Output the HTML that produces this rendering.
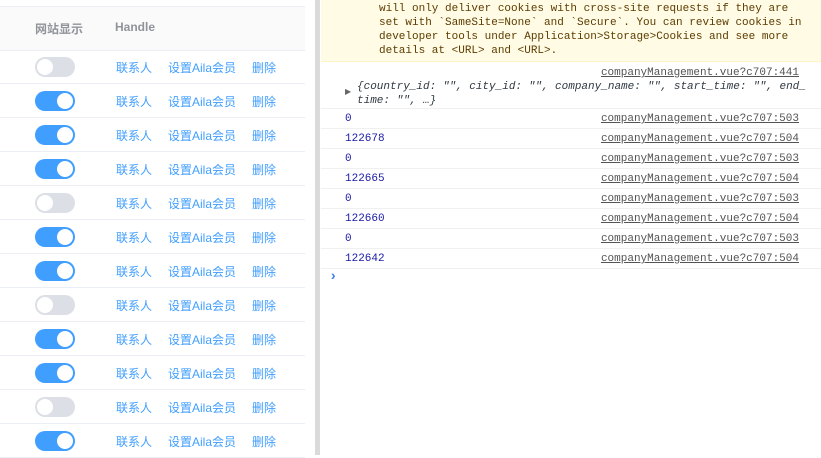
<html><head><style>
body{margin:0;width:821px;height:455px;overflow:hidden;background:#fff;font-family:"Liberation Sans","Noto Sans CJK SC",sans-serif;position:relative}
.hd{position:absolute;top:6px;left:0;width:305px;height:43px;background:#fafafa;border-top:1px solid #ebeef5;border-bottom:1px solid #ebeef5;font-size:12px;color:#909399;font-weight:bold}
.row{position:absolute;left:0;width:305px;height:33px;border-bottom:1px solid #ebeef5;font-size:12px;color:#409eff}
.sw{position:absolute;left:35px;top:7px;width:40px;height:20px;border-radius:10px;background:#dcdfe6}
.sw i{position:absolute;top:2px;left:2px;width:16px;height:16px;border-radius:50%;background:#fff}
.on{background:#409eff}.on i{left:22px}
.row span{position:absolute;top:9px}
.bar{position:absolute;left:315px;top:0;width:5px;height:455px;background:#dadada}
.c{position:absolute;left:321px;top:0;right:0;height:455px;font-family:"Liberation Mono",monospace;font-size:11px;color:#303942;white-space:nowrap}
.warn{position:absolute;left:0;top:0;right:0;height:60px;background:#fffbe5;border-bottom:1px solid #fff5c2;color:#5c3c00;padding-left:58px;line-height:14px}
.ln{position:absolute;left:0;right:0;border-bottom:1px solid #f0f0f0;height:19px;line-height:21px}
.ln b{font-weight:normal;color:#1a1aa6;position:absolute;left:24px}
.ln u,.src{position:absolute;right:22px;color:#545454}
</style></head><body>
<div class="hd"><span style="position:absolute;left:35px;top:13px">网站显示</span><span style="position:absolute;left:115px;top:13px">Handle</span></div>
<div id="rows"></div>
<script>
var s=[0,1,1,1,0,1,1,0,1,1,0,1],h='';
for(var i=0;i<12;i++){h+='<div class="row" style="top:'+(50+i*34)+'px"><div class="sw'+(s[i]?' on':'')+'"><i></i></div><span style="left:116px">联系人</span><span style="left:168px">设置Aila会员</span><span style="left:252px">删除</span></div>';}
document.getElementById('rows').innerHTML=h;
</script>
<div class="bar"></div>
<div class="c">
<div class="warn" style="padding-top:2px;height:59px">will only deliver cookies with cross-site requests if they are<br>set with `SameSite=None` and `Secure`. You can review cookies in<br>developer tools under Application&gt;Storage&gt;Cookies and see more<br>details at &lt;URL&gt; and &lt;URL&gt;.</div>
<div style="position:absolute;left:0;right:0;top:61px;height:47px;border-bottom:1px solid #f0f0f0;line-height:14px">
<u class="src" style="top:5px">companyManagement.vue?c707:441</u>
<span style="position:absolute;left:24px;font-size:8px;top:25px;color:#666">▶</span>
<span style="position:absolute;left:36px;top:19px;font-style:italic">{country_id: "", city_id: "", company_name: "", start_time: "", end_<br>time: "", …}</span></div>
<div class="ln" style="top:109px"><b>0</b><u>companyManagement.vue?c707:503</u></div>
<div class="ln" style="top:129px"><b>122678</b><u>companyManagement.vue?c707:504</u></div>
<div class="ln" style="top:149px"><b>0</b><u>companyManagement.vue?c707:503</u></div>
<div class="ln" style="top:169px"><b>122665</b><u>companyManagement.vue?c707:504</u></div>
<div class="ln" style="top:189px"><b>0</b><u>companyManagement.vue?c707:503</u></div>
<div class="ln" style="top:209px"><b>122660</b><u>companyManagement.vue?c707:504</u></div>
<div class="ln" style="top:229px"><b>0</b><u>companyManagement.vue?c707:503</u></div>
<div class="ln" style="top:249px"><b>122642</b><u>companyManagement.vue?c707:504</u></div>
<div style="position:absolute;left:8px;top:269px;color:#367cf1;font-weight:bold;font-size:14px">›</div>
</div>
</body></html>
